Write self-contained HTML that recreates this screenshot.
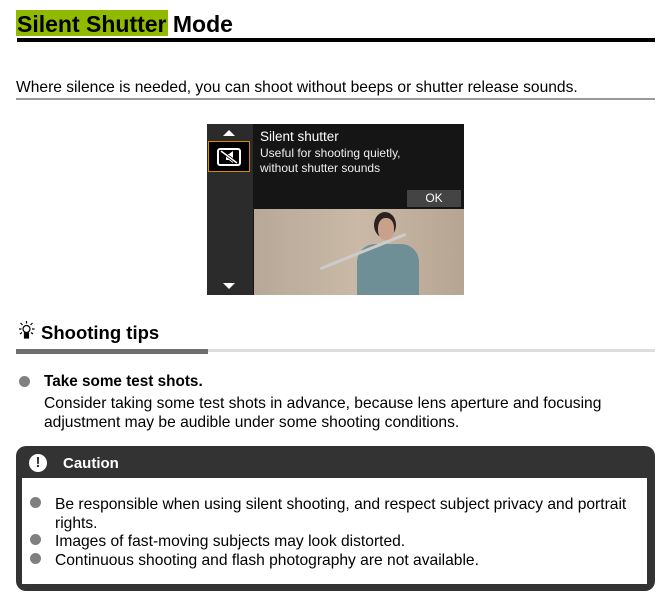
<!DOCTYPE html><html><head><style>
body{margin:0;width:663px;height:596px;background:#fff;font-family:"Liberation Sans",sans-serif;position:relative;overflow:hidden;color:#000}
.a{position:absolute;white-space:nowrap}
.dot{position:absolute;width:11px;height:11px;border-radius:50%;background:#808080}
</style></head><body>
<div class="a" style="left:16px;top:10px;width:152px;height:26px;background:#8fba00"></div>
<div class="a" style="left:17px;top:9px;font-size:23px;font-weight:bold;line-height:30px">Silent Shutter Mode</div>
<div class="a" style="left:17px;top:38px;width:638px;height:4px;background:#000"></div>
<div class="a" style="left:16px;top:79px;font-size:15.6px;line-height:18px">Where silence is needed, you can shoot without beeps or shutter release sounds.</div>
<div class="a" style="left:16px;top:98px;width:639px;height:2px;background:#999"></div>

<div class="a" style="left:207px;top:124px;width:257px;height:171px;background:#151515;overflow:hidden">
 <div class="a" style="left:0;top:0;width:46px;height:171px;background:#2b2b2b"></div>
 <div class="a" style="left:16px;top:6px;width:0;height:0;border-left:6px solid transparent;border-right:6px solid transparent;border-bottom:6px solid #fff"></div>
 <div class="a" style="left:16px;top:159px;width:0;height:0;border-left:6px solid transparent;border-right:6px solid transparent;border-top:6px solid #fff"></div>
 <div class="a" style="left:1px;top:17px;width:42px;height:31px;border:1.5px solid #d88a00;background:#000;box-sizing:border-box"></div>
 <svg class="a" style="left:10px;top:24px" width="24" height="18" viewBox="0 0 24 18"><rect x="1" y="1" width="22" height="16" rx="2" fill="none" stroke="#fff" stroke-width="2"/><path d="M9 6h3l4-3v12l-4-3H9z" fill="#fff"/><path d="M4 3l16 12" stroke="#000" stroke-width="3"/><path d="M4 3l16 12" stroke="#fff" stroke-width="1.5"/></svg>
 <div class="a" style="left:53px;top:5px;color:#fff;font-size:13.5px;line-height:16px">Silent shutter</div>
 <div class="a" style="left:53px;top:22px;color:#eee;font-size:12px;line-height:15px">Useful for shooting quietly,<br>without shutter sounds</div>
 <div class="a" style="left:200px;top:66px;width:54px;height:17px;background:#444;color:#fff;font-size:12px;line-height:17px;text-align:center">OK</div>
 <div class="a" style="left:47px;top:85px;width:210px;height:86px;background:linear-gradient(90deg,#b8a898,#c9b9a6 50%,#b5a592)"></div>
 <div class="a" style="left:167px;top:88px;width:22px;height:26px;border-radius:50%;background:#2b2220"></div>
 <div class="a" style="left:171px;top:94px;width:16px;height:22px;border-radius:45%;background:#c9a08a"></div>
 <div class="a" style="left:150px;top:120px;width:62px;height:51px;border-radius:18px 18px 0 0;background:#6d8f95"></div>
 <div class="a" style="left:110px;top:126px;width:92px;height:3px;background:#ccc;transform:rotate(-22deg)"></div>
</div>

<svg class="a" style="left:16px;top:321px" width="21" height="19" viewBox="0 0 21 19" fill="none" stroke="#000" stroke-width="1.2"><circle cx="10.5" cy="8" r="3.5"/><rect x="8.5" y="12" width="4" height="5" fill="#000"/><path d="M10.5 0v2.5M3 8h2.5M16 8h2.5M4.5 2l2 2M16.5 2l-2 2M4 13l2-1.5M17 13l-2-1.5"/></svg>
<div class="a" style="left:41px;top:322px;font-size:18.5px;font-weight:bold;line-height:22px">Shooting tips</div>
<div class="a" style="left:16px;top:349px;width:192px;height:5px;background:#6e6e6e"></div>
<div class="a" style="left:208px;top:349px;width:447px;height:3px;background:#ddd"></div>

<div class="dot" style="left:19px;top:376px"></div>
<div class="a" style="left:44px;top:373px;font-size:15.3px;font-weight:bold;line-height:18px">Take some test shots.</div>
<div class="a" style="left:44px;top:395px;font-size:15.6px;line-height:18.5px">Consider taking some test shots in advance, because lens aperture and focusing<br>adjustment may be audible under some shooting conditions.</div>

<div class="a" style="left:16px;top:446px;width:639px;height:145px;background:#333;border-radius:10px"></div>
<div class="a" style="left:22px;top:478px;width:625px;height:106px;background:#fff"></div>
<div class="a" style="left:29px;top:454px;width:18px;height:18px;border-radius:50%;background:#fff;color:#333;font-weight:bold;font-size:15px;line-height:18px;text-align:center">!</div>
<div class="a" style="left:63px;top:455px;color:#fff;font-size:15px;font-weight:bold;line-height:18px">Caution</div>
<div class="dot" style="left:30px;top:497px"></div>
<div class="dot" style="left:30px;top:534px"></div>
<div class="dot" style="left:30px;top:553px"></div>
<div class="a" style="left:55px;top:496px;font-size:15.6px;line-height:18.5px">Be responsible when using silent shooting, and respect subject privacy and portrait<br>rights.<br>Images of fast-moving subjects may look distorted.<br>Continuous shooting and flash photography are not available.</div>
</body></html>
